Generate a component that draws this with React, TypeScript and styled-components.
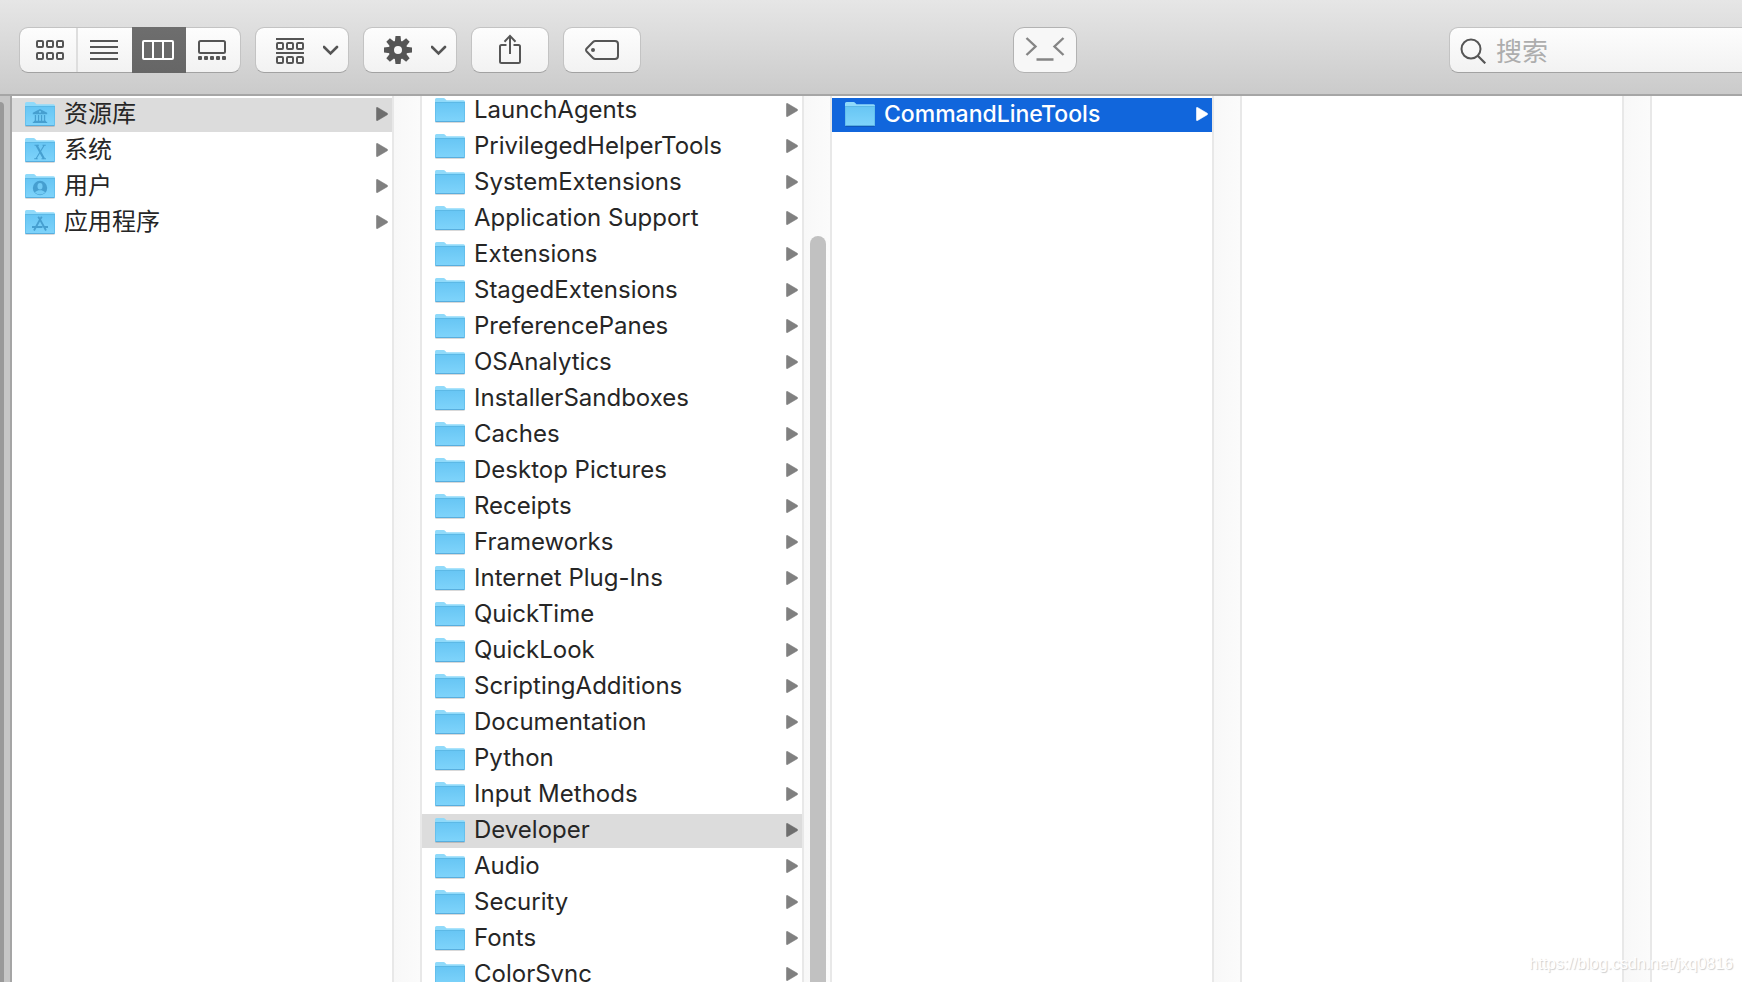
import React from "react";
import styled, { createGlobalStyle, css } from "styled-components";

const ink = "#555555";

const GlobalStyle = createGlobalStyle`
  *, *::before, *::after { box-sizing: border-box; }
  body {
    margin: 0;
    background: #ffffff;
    color: #262626;
    font-family: Inter, "Noto Sans CJK SC", sans-serif;
  }
  button, input { font: inherit; color: inherit; margin: 0; }
  svg { display: block; flex: none; }
`;

const Window = styled.div`
  display: flex;
  flex-direction: column;
  height: 100vh;
  overflow: hidden;
`;

/* ---------- toolbar ---------- */

const Toolbar = styled.header`
  display: flex;
  flex: none;
  align-items: flex-start;
  gap: 14px;
  height: 96px;
  padding: 27px 0 0 19px;
  background: linear-gradient(#e6e6e6, #cbcbcb);
  border-bottom: 2px solid #a6a6a6;
`;

const controlSurface = css`
  height: 46px;
  background: linear-gradient(#fdfdfd, #f2f2f2);
  background-clip: padding-box;
  border: 1px solid #c3c3c3;
  border-bottom-color: #a2a2a2;
  border-radius: 9px;
`;

const ToolButton = styled.button`
  ${controlSurface}
  display: flex;
  flex: none;
  align-items: center;
  justify-content: center;
  width: 78px;
  padding: 0;
  color: ${ink};
`;

const MenuButton = styled(ToolButton)`
  justify-content: flex-start;
  gap: 19px;
  width: 94px;
  padding-left: 20px;
`;

const TerminalButton = styled(ToolButton)`
  width: 64px;
  background: #f7f7f7;
  border: 1px solid #b2b2b2;
  border-radius: 11px;
  color: #858585;
`;

const ViewSwitch = styled.div`
  ${controlSurface}
  display: flex;
  flex: none;
  width: 222px;
`;

const ViewButton = styled.button<{ $active?: boolean }>`
  display: flex;
  align-items: center;
  width: 54px;
  padding: 0 0 0 10px;
  border: 0;
  background: none;
  color: ${ink};

  &:first-child {
    width: 56px;
    padding-left: 14px;
  }
  &:nth-child(2) {
    width: 56px;
    border-left: 2px solid #dedede;
  }
  ${(p) =>
    p.$active &&
    css`
      margin: -1px 0;
      background: linear-gradient(#6e6e6e, #666666);
      color: #ffffff;
    `}
`;

const Spacer = styled.div`
  flex: 1;
  margin: 0 -7px;
`;

const SearchField = styled.label`
  ${controlSurface}
  display: flex;
  flex: none;
  align-items: center;
  gap: 10px;
  width: 293px;
  padding: 2px 0 0 10px;
  border-right: 0;
  border-radius: 9px 0 0 9px;
  color: ${ink};
`;

const SearchInput = styled.input`
  flex: 1;
  min-width: 0;
  height: 40px;
  padding: 0;
  border: 0;
  outline: 0;
  background: none;
  font-size: 26px;
  &::placeholder { color: #adadad; opacity: 1; }
`;

/* ---------- browser columns ---------- */

const Browser = styled.main`
  display: flex;
  flex: 1;
  min-height: 0;
`;

const SidebarEdge = styled.div`
  flex: none;
  width: 12px;
  padding-top: 6px;
  background: #c6c6c6;
  border-right: 2px solid #a5a5a5;
`;

const SidebarThumb = styled.div`
  width: 4px;
  height: 100%;
  background: #999999;
  border-radius: 0 4px 0 0;
`;

const Column = styled.section`
  flex: none;
  width: 380px;
  overflow: hidden;
`;

const LastColumn = styled(Column)`
  flex: 1;
`;

const List = styled.ul<{ $scrolled?: boolean }>`
  display: flex;
  flex-direction: column;
  gap: 2px;
  margin: ${(p) => (p.$scrolled ? "-2px" : "2px")} 0 0;
  padding: 0;
  list-style: none;
`;

type Tone = "plain" | "path" | "selected";

const rowBackground = { plain: "transparent", path: "#dcdcdc", selected: "#1166dc" };
const arrowColor = { plain: "#808080", path: "#6e6e6e", selected: "#ffffff" };

const Row = styled.button<{ $tone: Tone }>`
  display: flex;
  align-items: center;
  gap: 9px;
  width: 100%;
  height: 34px;
  padding: 0 4px 2px 13px;
  border: 0;
  background: ${(p) => rowBackground[p.$tone]};
  color: ${(p) => (p.$tone === "selected" ? "#ffffff" : "inherit")};
  text-align: left;
`;

const Name = styled.span<{ $strong: boolean }>`
  flex: 1;
  font-size: ${(p) => (p.$strong ? 23 : 24)}px;
  font-weight: ${(p) => (p.$strong ? 500 : 400)};
  line-height: 32px;
  height: 32px;
  white-space: nowrap;
`;

const Gutter = styled.div`
  flex: none;
  width: 30px;
  padding: 140px 6px 0;
  background: linear-gradient(90deg, #f8f8f8, #fbfbfb);
  border: solid #e8e8e8;
  border-width: 0 2px;
`;

const Thumb = styled.div`
  width: 16px;
  height: 100%;
  background: #c1c1c1;
  border-radius: 8px 8px 0 0;
`;

const Watermark = styled.div`
  position: absolute;
  right: 9px;
  bottom: 8px;
  font-family: "Liberation Sans", sans-serif;
  font-size: 16px;
  line-height: 20px;
  color: #ffffff;
  text-shadow: 1px 1px 1px #cecece;
`;

/* ---------- drawings ---------- */

const Squares = ({ x, y }: { x: number; y: number }) => (
  <g fill="none" stroke="currentColor" strokeWidth="2">
    {[0, 10, 20].map((dx) => (
      <rect key={dx} x={x + dx + 1} y={y + 1} width="6" height="6" rx="1" />
    ))}
  </g>
);

const GridIcon = () => (
  <svg width="32" height="20" aria-hidden="true">
    <Squares x={2} y={0} />
    <Squares x={2} y={12} />
  </svg>
);

const ListIcon = () => (
  <svg width="32" height="20" fill="currentColor" aria-hidden="true">
    {[0, 6, 12, 18].map((y) => (
      <rect key={y} x="2" y={y} width="28" height="2" />
    ))}
  </svg>
);

const ColumnsIcon = () => (
  <svg width="32" height="20" fill="none" stroke="currentColor" strokeWidth="2" aria-hidden="true">
    <rect x="1" y="1" width="30" height="18" rx="1" />
    <path d="M11 1v18M21 1v18" />
  </svg>
);

const GalleryIcon = () => (
  <svg width="32" height="20" fill="currentColor" aria-hidden="true">
    <rect x="3" y="1" width="26" height="12" rx="1.5" fill="none" stroke="currentColor" strokeWidth="2" />
    {[2, 8, 14, 20, 26].map((x) => (
      <rect key={x} x={x} y="16" width="4" height="4" rx="1" />
    ))}
  </svg>
);

const ArrangeIcon = () => (
  <svg width="28" height="28" aria-hidden="true">
    <path d="M0 3h28M0 17h28" stroke="currentColor" strokeWidth="2" />
    <Squares x={0} y={6} />
    <Squares x={0} y={20} />
  </svg>
);

const Chevron = () => (
  <svg width="16" height="12" fill="none" stroke="currentColor" strokeWidth="2.6" aria-hidden="true">
    <path d="M1 3 7.500 9.500 14 3" strokeLinecap="round" />
  </svg>
);

const GearIcon = () => (
  <svg width="28" height="28" viewBox="-14 -14 28 28" fill="currentColor" aria-hidden="true">
    {[0, 45, 90, 135, 180, 225, 270, 315].map((a) => (
      <path key={a} d="M-3.200-8 -2.500-14H2.500L3.200-8Z" transform={`rotate(${a})`} />
    ))}
    <circle r="6.700" fill="none" stroke="currentColor" strokeWidth="5.400" />
  </svg>
);

const ShareIcon = () => (
  <svg width="22" height="32" fill="none" stroke="currentColor" strokeWidth="2" aria-hidden="true">
    <path d="M7.500 11H2.500Q1 11 1 12.500V27.500Q1 29 2.500 29H19.500Q21 29 21 27.500V12.500Q21 11 19.500 11H14.500" />
    <path d="M11 20V2M5.500 7.700 11 1.900l5.500 5.800" />
  </svg>
);

const TagIcon = () => (
  <svg width="34" height="20" fill="none" stroke="currentColor" strokeWidth="2" aria-hidden="true">
    <path d="M10.500 1H30Q33 1 33 4V16Q33 19 30 19H10.500Q9 19 8 18L1.700 11.500Q.4 10 1.700 8.500L8 2Q9 1 10.500 1Z" />
    <circle cx="8" cy="10" r="2" fill="currentColor" stroke="none" />
  </svg>
);

const TerminalIcon = () => (
  <svg width="40" height="28" fill="none" stroke="currentColor" strokeWidth="2.400" aria-hidden="true">
    <path d="M1.500 2 10.500 10.500 1.500 19M38.500 2 29.500 10.500 38.500 19M11.500 23.500h17" />
  </svg>
);

const SearchIcon = () => (
  <svg width="26" height="26" fill="none" stroke="currentColor" strokeWidth="2" aria-hidden="true">
    <circle cx="11" cy="11" r="9.500" />
    <path d="M17.700 17.700 25.300 25.300" strokeWidth="2.200" />
  </svg>
);

type Emblem = "library" | "system" | "users" | "apps";

const emblems: Record<Emblem, React.ReactNode> = {
  library: (
    <g fill="#469fd0">
      <path fillRule="evenodd" d="M15 7 22.200 10.700V12.300H7.800v-1.600ZM15 8.700a1 1 0 1 0 .01 0Z" />
      <path d="M9.800 13h1.300v5.700H9.800zM12.900 13h1.300v5.700h-1.300zM15.900 13h1.300v5.700h-1.300zM18.900 13h1.300v5.700h-1.300zM9 18.700h12v1h1.200V21H7.800v-1.300H9z" />
    </g>
  ),
  system: (
    <g fill="none" stroke="#469fd0">
      <path d="M9.500 7.300h4.500M17.500 7.300h3.300M9.200 20.700h3.500M16.500 20.700h4.500M19.200 7.300 11 20.700" strokeWidth="1.100" />
      <path d="M11.500 7.300 19 20.700" strokeWidth="2.200" />
    </g>
  ),
  users: (
    <g>
      <circle cx="15" cy="14" r="7.200" fill="#469fd0" />
      <ellipse cx="15" cy="12.300" rx="2.500" ry="3.300" fill="#72cbf5" />
      <path d="M9.800 18.300Q11 17 13.500 16.200h3Q19 17 20.200 18.300 18 20.500 15 20.500T9.800 18.300Z" fill="#72cbf5" />
    </g>
  ),
  apps: (
    <path
      d="M13.200 6.800 15 9.500 21 20.500M16.800 6.800 15 9.500 9 20.500M7 17h10.500M19.500 17H23"
      fill="none"
      stroke="#469fd0"
      strokeWidth="1.800"
    />
  ),
};

const FolderShape = styled.svg`
  overflow: visible;
`;

const FolderIcon = ({ emblem }: { emblem?: Emblem }) => (
  <FolderShape width="30" height="24" aria-hidden="true">
    <defs>
      <linearGradient id="folder" x1="0" y1="0" x2="0" y2="1">
        <stop offset="0" stopColor="#68c6f4" />
        <stop offset="1" stopColor="#7fd4fb" />
      </linearGradient>
    </defs>
    <path d="M0 22h30v1.500Q30 25 28.500 25h-27Q0 25 0 23.500Z" fill="#000000" opacity=".15" />
    <path d="M0 1.500Q0 0 1.500 0H8.500Q9.500 0 10.300 1L11.500 2.300H28.500Q30 2.300 30 3.800V8H0Z" fill="#90dafa" />
    <path d="M0 5H30V23Q30 24 29 24H1Q0 24 0 23Z" fill="url(#folder)" />
    <path d="M0 4.500h30" stroke="#5cb9e6" />
    <path d="M.5 23.500h29" stroke="#58aede" />
    <path d="M.5 5v18M29.500 5v18" stroke="#5fbbe9" opacity=".7" />
    {emblem && emblems[emblem]}
  </FolderShape>
);

const Arrow = ({ color }: { color: string }) => (
  <svg width="12" height="14" aria-hidden="true">
    <path d="M.5 1Q.5 0 1.500.5L11.300 6.300Q12 7 11.300 7.700L1.500 13.500Q.5 14 .5 13Z" fill={color} stroke={color} strokeWidth=".6" />
  </svg>
);

/* ---------- data ---------- */

type Entry = { name: string; emblem?: Emblem; tone?: Tone };

const rootFolders: Entry[] = [
  { name: "资源库", emblem: "library", tone: "path" },
  { name: "系统", emblem: "system" },
  { name: "用户", emblem: "users" },
  { name: "应用程序", emblem: "apps" },
];

const libraryFolders: Entry[] = [
  "LaunchAgents",
  "PrivilegedHelperTools",
  "SystemExtensions",
  "Application Support",
  "Extensions",
  "StagedExtensions",
  "PreferencePanes",
  "OSAnalytics",
  "InstallerSandboxes",
  "Caches",
  "Desktop Pictures",
  "Receipts",
  "Frameworks",
  "Internet Plug-Ins",
  "QuickTime",
  "QuickLook",
  "ScriptingAdditions",
  "Documentation",
  "Python",
  "Input Methods",
  "Developer",
  "Audio",
  "Security",
  "Fonts",
  "ColorSync",
].map((name) => ({ name, tone: name === "Developer" ? "path" : "plain" }));

const developerFolders: Entry[] = [{ name: "CommandLineTools", tone: "selected" }];

const FolderList = ({ entries, scrolled }: { entries: Entry[]; scrolled?: boolean }) => (
  <List $scrolled={scrolled}>
    {entries.map(({ name, emblem, tone = "plain" }) => (
      <li key={name}>
        <Row type="button" $tone={tone}>
          <FolderIcon emblem={emblem} />
          <Name $strong={tone === "selected"}>{name}</Name>
          <Arrow color={arrowColor[tone]} />
        </Row>
      </li>
    ))}
  </List>
);

export default function App() {
  return (
    <Window>
      <GlobalStyle />
      <Toolbar>
        <ViewSwitch role="group" aria-label="显示方式">
          <ViewButton type="button" aria-label="图标"><GridIcon /></ViewButton>
          <ViewButton type="button" aria-label="列表"><ListIcon /></ViewButton>
          <ViewButton type="button" aria-label="分栏" aria-pressed="true" $active><ColumnsIcon /></ViewButton>
          <ViewButton type="button" aria-label="画廊"><GalleryIcon /></ViewButton>
        </ViewSwitch>
        <MenuButton type="button" aria-label="排列" aria-haspopup="menu">
          <ArrangeIcon />
          <Chevron />
        </MenuButton>
        <MenuButton type="button" aria-label="操作" aria-haspopup="menu">
          <GearIcon />
          <Chevron />
        </MenuButton>
        <ToolButton type="button" aria-label="共享"><ShareIcon /></ToolButton>
        <ToolButton type="button" aria-label="标签"><TagIcon /></ToolButton>
        <Spacer />
        <TerminalButton type="button" aria-label="终端"><TerminalIcon /></TerminalButton>
        <Spacer />
        <SearchField>
          <SearchIcon />
          <SearchInput type="text" placeholder="搜索" aria-label="搜索" />
        </SearchField>
      </Toolbar>
      <Browser>
        <SidebarEdge><SidebarThumb /></SidebarEdge>
        <Column><FolderList entries={rootFolders} /></Column>
        <Gutter />
        <Column><FolderList entries={libraryFolders} scrolled /></Column>
        <Gutter><Thumb /></Gutter>
        <Column><FolderList entries={developerFolders} /></Column>
        <Gutter />
        <Column />
        <Gutter />
        <LastColumn />
      </Browser>
      <Watermark>https://blog.csdn.net/jxq0816</Watermark>
    </Window>
  );
}
